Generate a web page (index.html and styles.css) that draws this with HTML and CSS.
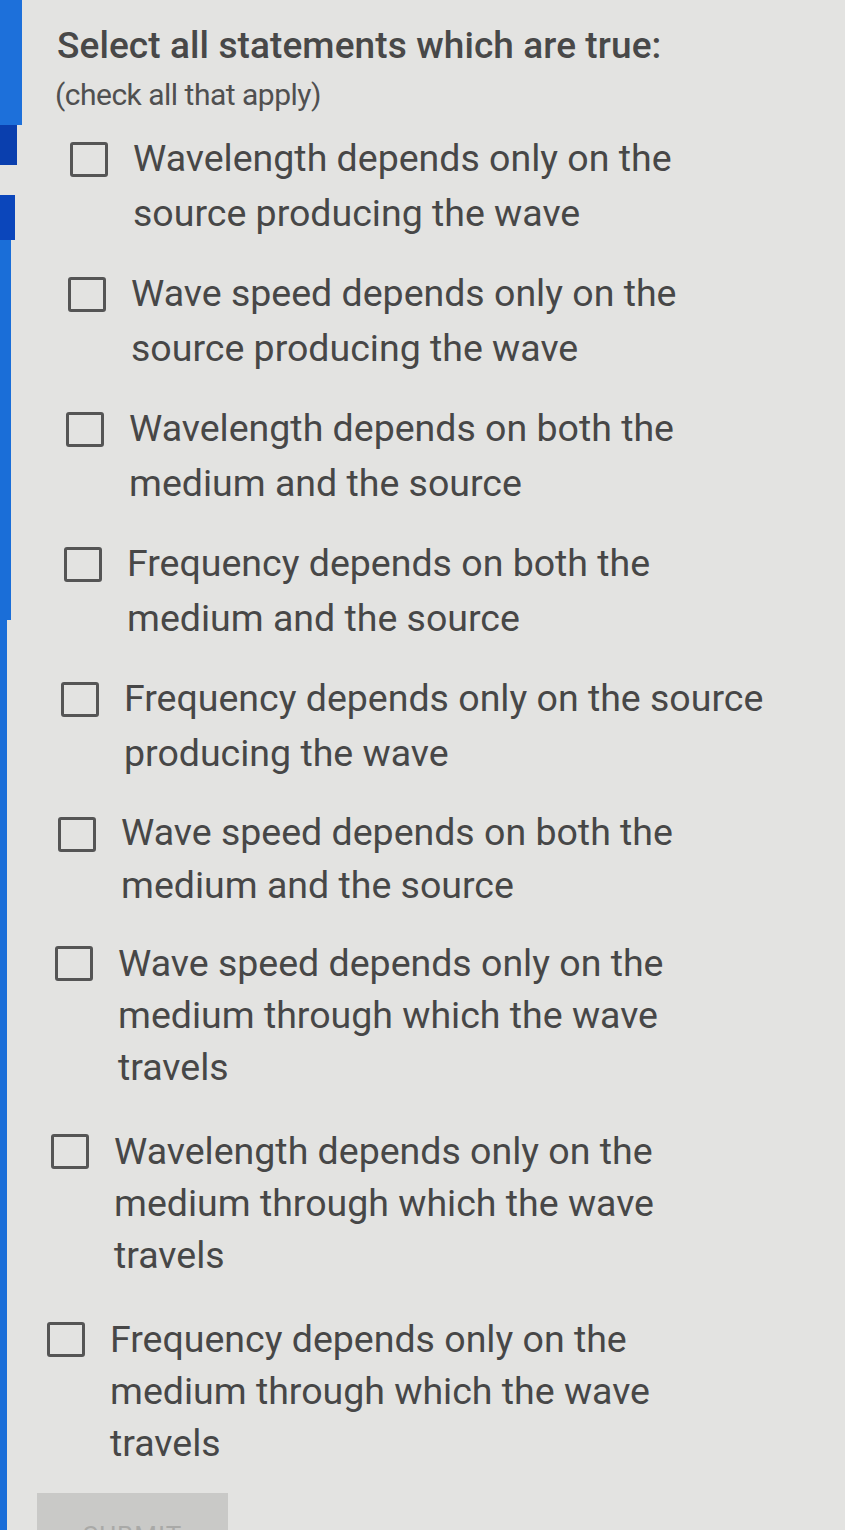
FILE: index.html
```html
<!DOCTYPE html>
<html>
<head>
<meta charset="utf-8">
<link rel="stylesheet" href="styles.css">
</head>
<body>
<div class="screen">
  <div class="edge">
    <div class="edge-top"></div>
    <div class="edge-dark"></div>
    <div class="edge-notch"></div>
    <div class="edge-dark2"></div>
    <div class="edge-mid"></div>
    <div class="edge-rest"></div>
  </div>
  <main class="content">
    <h1 class="title">Select all statements which are true:</h1>
    <p class="hint">(check all that apply)</p>
    <ul class="options">
      <li class="option"><span class="box"></span><span class="label">Wavelength depends only on the<br>source producing the wave</span></li>
      <li class="option"><span class="box"></span><span class="label">Wave speed depends only on the<br>source producing the wave</span></li>
      <li class="option"><span class="box"></span><span class="label">Wavelength depends on both the<br>medium and the source</span></li>
      <li class="option"><span class="box"></span><span class="label">Frequency depends on both the<br>medium and the source</span></li>
      <li class="option"><span class="box"></span><span class="label">Frequency depends only on the source<br>producing the wave</span></li>
      <li class="option"><span class="box"></span><span class="label">Wave speed depends on both the<br>medium and the source</span></li>
      <li class="option"><span class="box"></span><span class="label">Wave speed depends only on the<br>medium through which the wave<br>travels</span></li>
      <li class="option"><span class="box"></span><span class="label">Wavelength depends only on the<br>medium through which the wave<br>travels</span></li>
      <li class="option"><span class="box"></span><span class="label">Frequency depends only on the<br>medium through which the wave<br>travels</span></li>
    </ul>
    <button class="submit">SUBMIT</button>
  </main>
</div>
</body>
</html>
```

FILE: styles.css
```css
html, body {
  margin: 0;
  padding: 0;
}
body {
  background: #e3e3e1;
  font-family: Roboto, "Noto Sans", sans-serif;
  color: #474747;
  overflow: hidden;
}
.screen {
  display: flex;
  height: 1530px;
}
.edge {
  width: 22px;
  display: flex;
  flex-direction: column;
  flex-shrink: 0;
}
.edge-top { height: 125px; background: #1d70da; width: 22px; }
.edge-dark { height: 40px; background: #0a3fae; width: 17px; }
.edge-notch { height: 30px; background: #e3e3e1; width: 10px; }
.edge-dark2 { height: 45px; background: #0b46bb; width: 15px; }
.edge-mid { height: 380px; background: #1a6ed8; width: 11px; }
.edge-rest { flex: 1; background: #1a6ed8; width: 7px; }
.content {
  flex: 1;
  padding: 24px 0 0 35px;
}
.title {
  margin: 0;
  font-size: 37px;
  font-weight: 500;
  line-height: 44px;
  color: #484848;
  letter-spacing: 0.1px;
}
.hint {
  margin: 8px 0 0 -2px;
  font-size: 30px;
  line-height: 38px;
  color: #505050;
  letter-spacing: -0.5px;
}
.options {
  list-style: none;
  margin: 17px 0 0 0;
  padding: 0;
  display: flex;
  flex-direction: column;
  gap: 25px;
}
.option {
  display: flex;
  align-items: flex-start;
  gap: 25px;
}
.box {
  width: 32px;
  height: 29px;
  border: 3px solid #555;
  border-radius: 3px;
  flex-shrink: 0;
  margin-top: 11px;
}
.label {
  font-size: 37.5px;
  line-height: 55px;
  color: #474747;
}
.option:nth-child(1) { margin-left: 13px; }
.option:nth-child(2) { margin-left: 11px; }
.option:nth-child(3) { margin-left: 9px; }
.option:nth-child(4) { margin-left: 7px; }
.option:nth-child(5) { margin-left: 4px; }
.option:nth-child(6) { margin-left: 1px; }
.option:nth-child(7) { margin-left: -2px; }
.option:nth-child(8) { margin-left: -6px; margin-top: 7px; }
.option:nth-child(9) { margin-left: -10px; margin-top: 7px; }
.option:nth-child(6) .label { line-height: 53px; }
.option:nth-child(n+7) .label { line-height: 52px; }
.option:nth-child(n+7) .box { margin-top: 9px; }
.submit {
  margin: 24px 0 0 -20px;
  width: 191px;
  height: 60px;
  border: none;
  background: #c9c9c7;
  color: #a9a9a7;
  font-family: Roboto, sans-serif;
  font-size: 26px;
  letter-spacing: 1px;
  padding: 26px 0 0 0;
  text-align: center;
  display: block;
}
```
